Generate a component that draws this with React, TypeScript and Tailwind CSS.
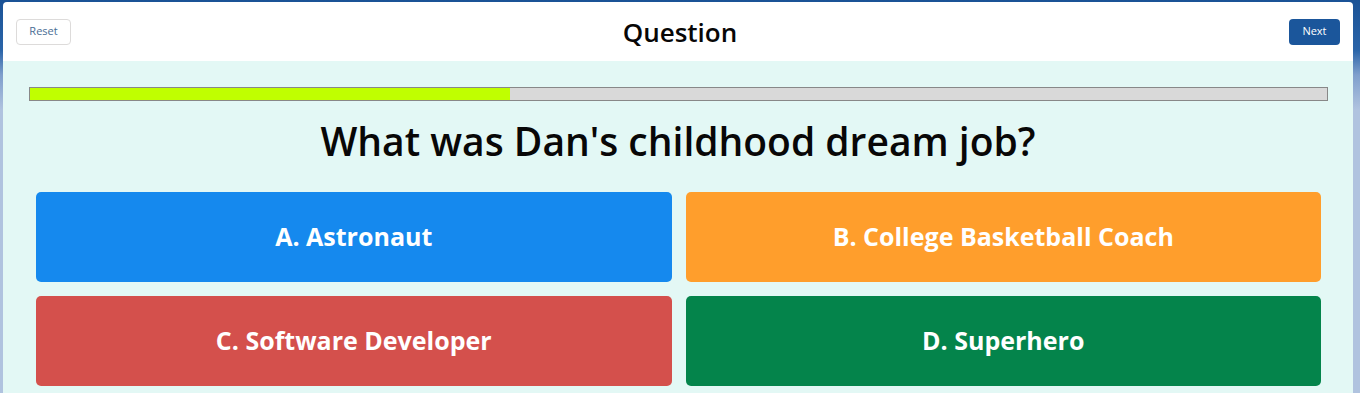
const answers = [
  { label: "A. Astronaut", color: "bg-[#1589ee]" },
  { label: "B. College Basketball Coach", color: "bg-[#ff9e2c]" },
  { label: "C. Software Developer", color: "bg-[#d4504c]" },
  { label: "D. Superhero", color: "bg-[#04844b]" },
];

const progress = 37;

export default function App() {
  return (
    <div
      className="min-h-[393px] bg-[linear-gradient(180deg,#1a5296_0px,#2a64a8_50px,#7f9fcc_75px,#b0c3df_110px,#b0c3df_100%)] pt-[2px] pl-[3px] pr-[7px]"
      style={{ fontFamily: '"Open Sans", "Noto Sans", sans-serif' }}
    >
      <header className="flex h-[59px] items-center justify-between rounded-t-[4px] bg-white px-[13px]">
        <button className="h-[26px] w-[55px] rounded-[4px] border border-[#dddbda] bg-white text-[11px] text-[#4a6d94]">
          Reset
        </button>
        <h1 className="text-[26px] font-semibold leading-none text-[#080707]">Question</h1>
        <button className="h-[26px] w-[51px] rounded-[4px] bg-[#1b569b] text-[11px] text-white">
          Next
        </button>
      </header>

      <main className="h-[332px] bg-[#e3f8f5] px-[26px] pt-[26px]">
        <div className="mr-[-1px] flex h-[14px] border border-[#888888] bg-[#d9d9d9]">
          <div className="h-full bg-[#c0ff00]" style={{ width: `${progress}%` }} />
        </div>

        <h2 className="mt-[15px] text-center text-[39px] font-semibold leading-[50px] text-[#080707]">
          What was Dan's childhood dream job?
        </h2>

        <div className="mt-[26px] grid grid-cols-2 gap-[14px] pl-[7px] pr-[6px]">
          {answers.map((a) => (
            <button
              key={a.label}
              className={`flex h-[90px] items-center justify-center rounded-[5px] ${a.color} text-[25px] font-bold text-white`}
            >
              {a.label}
            </button>
          ))}
        </div>
      </main>
    </div>
  );
}
